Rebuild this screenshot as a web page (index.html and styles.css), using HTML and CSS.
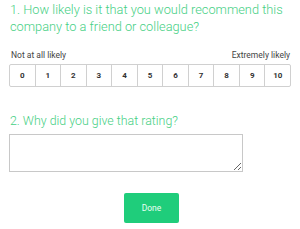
FILE: index.html
```html
<!DOCTYPE html>
<html>
<head>
<meta charset="utf-8">
<link rel="stylesheet" href="styles.css">
</head>
<body>
<div class="survey">
  <h2 class="question q1">1. How likely is it that you would recommend this company to a friend or colleague?</h2>
  <div class="labels"><span>Not at all likely</span><span>Extremely likely</span></div>
  <div class="scale">
    <div class="cell">0</div><div class="cell">1</div><div class="cell">2</div><div class="cell">3</div><div class="cell">4</div><div class="cell">5</div><div class="cell">6</div><div class="cell">7</div><div class="cell">8</div><div class="cell">9</div><div class="cell">10</div>
  </div>
  <h2 class="question q2">2. Why did you give that rating?</h2>
  <textarea class="answer"></textarea>
  <div class="actions"><button class="done">Done</button></div>
</div>
</body>
</html>
```
FILE: styles.css
```css
html, body { margin: 0; padding: 0; background: #fff; }
body { font-family: "Roboto", "Liberation Sans", sans-serif; }
.survey { padding: 0 9px; width: 282px; }
.question {
  margin: 0;
  font-weight: 300;
  font-size: 12.8px;
  line-height: 17px;
  color: #46cf84;
  padding-left: 1px;
}
.q1 { padding-top: 1px; }
.labels {
  display: flex;
  justify-content: space-between;
  font-size: 8.5px;
  color: #444;
  margin-top: 14px;
  padding: 0 1px 0 2px;
  line-height: 12px;
}
.scale {
  display: flex;
  margin-top: 3px;
  border: 1px solid #d0d0d0;
  border-radius: 2px;
  height: 21px;
}
.cell {
  flex: 1;
  display: flex;
  align-items: center;
  justify-content: center;
  font-size: 8px;
  font-weight: 700;
  color: #333;
  border-left: 1px solid #d0d0d0;
}
.cell:first-child { border-left: none; }
.q2 { margin-top: 25px; font-size: 12.4px; }
.answer {
  display: block;
  box-sizing: border-box;
  width: 234px;
  height: 38px;
  margin-top: 5px;
  border: 1px solid #c8c8c8;
  border-radius: 0;
  padding: 0;
  resize: both;
}
.actions { display: flex; justify-content: center; margin-top: 21px; }
.done {
  width: 55px;
  height: 30px;
  border: none;
  border-radius: 2px;
  background: #1fcd7b;
  color: #e8fff2;
  font-family: "Roboto", "Liberation Sans", sans-serif;
  font-size: 8.5px;
  padding: 0;
  margin-left: 3px;
}
```
